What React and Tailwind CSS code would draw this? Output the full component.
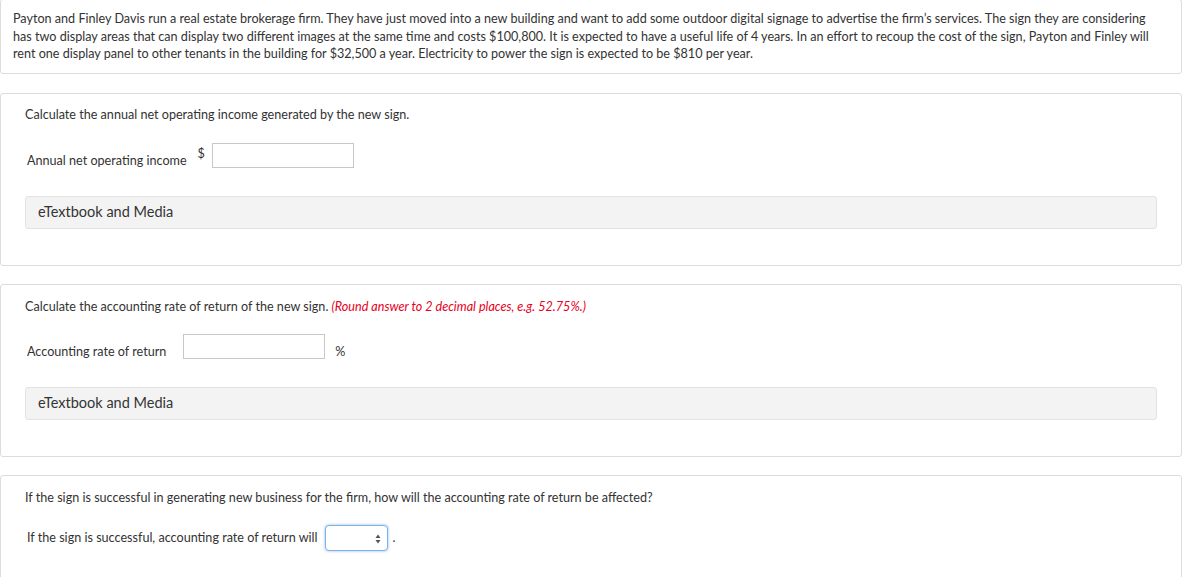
import React from 'react';

const Card = ({ className = '', children }) => (
  <div className={`bg-white border border-[#dcdcdc] rounded-[3px] ${className}`}>{children}</div>
);

const MediaBar = () => (
  <div className="mt-[28px] h-[33px] flex items-center px-[12px] bg-[#f3f3f3] border border-[#e2e2e2] rounded-[3px] text-[14.5px] text-[#333]">
    eTextbook and Media
  </div>
);

const TextInput = ({ className = '' }) => (
  <input
    type="text"
    className={`w-[142px] h-[25px] border border-[#c8c8c8] bg-white px-1 text-[13px] outline-none ${className}`}
  />
);

export default function App() {
  return (
    <div className="w-[1182px] min-h-[577px] bg-white text-[#333] font-['Lato','Liberation_Sans',sans-serif] text-[12.6px] leading-[17.5px] overflow-hidden">
      <Card className="-mt-px w-[1182px] pl-[12px] pr-[16px] pt-[10px] pb-[10px]">
        <p>
          Payton and Finley Davis run a real estate brokerage firm. They have just moved into a new building and want to add some outdoor digital signage to advertise the firm’s services. The sign they are considering has two display areas that can display two different images at the same time and costs $100,800. It is expected to have a useful life of 4 years. In an effort to recoup the cost of the sign, Payton and Finley will rent one display panel to other tenants in the building for $32,500 a year. Electricity to power the sign is expected to be $810 per year.
        </p>
      </Card>

      <Card className="mt-[19px] w-[1182px] px-[24px] pt-[12px] pb-[36px]">
        <p className="leading-[18px]">Calculate the annual net operating income generated by the new sign.</p>
        <div className="mt-[19px] flex items-end">
          <span className="ml-[2px] leading-[16px] mb-[-1px]">Annual net operating income</span>
          <span className="ml-[11px] self-start mt-[4px] leading-[14px]">$</span>
          <TextInput className="ml-[7px]" />
        </div>
        <MediaBar />
      </Card>

      <Card className="mt-[18px] w-[1182px] px-[24px] pt-[13px] pb-[36px]">
        <p className="leading-[18px]">
          Calculate the accounting rate of return of the new sign.{' '}
          <span className="italic text-[#e8001c]">(Round answer to 2 decimal places, e.g. 52.75%.)</span>
        </p>
        <div className="mt-[18px] flex items-end">
          <span className="ml-[2px] leading-[16px] mb-[-1px]">Accounting rate of return</span>
          <TextInput className="ml-[17px]" />
          <span className="ml-[10px] leading-[16px] mb-[-1px]">%</span>
        </div>
        <MediaBar />
      </Card>

      <Card className="mt-[18px] w-[1182px] px-[24px] pt-[13px] pb-[40px]">
        <p className="leading-[18px]">
          If the sign is successful in generating new business for the firm, how will the accounting rate of return be affected?
        </p>
        <div className="mt-[18px] flex items-center">
          <span className="ml-[2px]">If the sign is successful, accounting rate of return will</span>
          <div className="ml-[7px] relative w-[63px] h-[26px] rounded-[4px] border border-[#7fb0e6] shadow-[0_0_3px_rgba(70,140,230,0.6)] bg-white">
            <svg className="absolute right-[6px] top-[8px]" width="6" height="10" viewBox="0 0 6 10">
              <path d="M3 0.5 L5.5 4 L0.5 4 Z" fill="#555" />
              <path d="M3 9.5 L5.5 6 L0.5 6 Z" fill="#555" />
            </svg>
          </div>
          <span className="ml-[5px]">.</span>
        </div>
      </Card>
    </div>
  );
}
